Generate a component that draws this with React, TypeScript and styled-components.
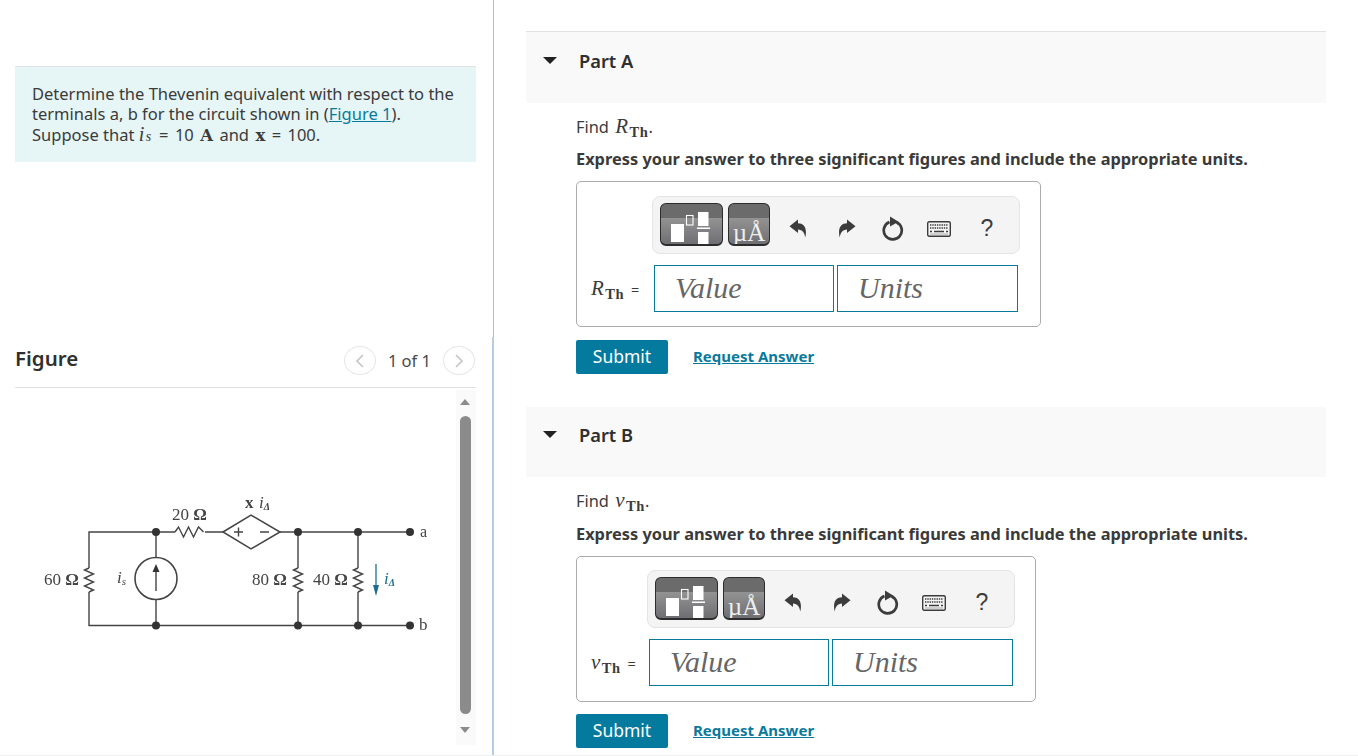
import React from "react";
import styled, { createGlobalStyle } from "styled-components";

const Global = createGlobalStyle`
  html, body { margin: 0; padding: 0; background: #fff; }
  body { width: 1358px; height: 756px; overflow: hidden; font-family: "Noto Sans", "Open Sans", sans-serif; color: #3b3b3b; }
  #root { width: 1358px; height: 756px; }
`;

const Page = styled.div`
  display: flex;
  width: 1358px;
  height: 756px;
  overflow: hidden;
  border-bottom: 1px solid #efefef;
  box-sizing: border-box;
`;
const LeftColumn = styled.section`
  width: 492px;
  flex: none;
  box-sizing: border-box;
  padding: 66px 16px 0 15px;
  display: flex;
  flex-direction: column;
`;
const Divider = styled.div`
  width: 2px;
  flex: none;
  display: flex;
  flex-direction: column;
`;
const DividerTop = styled.div`
  height: 337px;
  width: 1px;
  margin-left: 1px;
  background: #bcbcbc;
`;
const DividerBottom = styled.div`
  flex: 1;
  background: #b7cde1;
`;
const Intro = styled.div`
  background: #e6f5f6;
  border-top: 1px solid #dfe3e6;
  padding: 16.6px 17px 0;
  height: 96px;
  box-sizing: border-box;
  font-size: 16.5px;
  line-height: 20.4px;
`;
const Link = styled.a`
  color: #0a7a9c;
  text-decoration: underline;
`;
const Formula = styled.span`
  word-spacing: 2.1px;
`;
const Var = styled.span<{ $size?: number }>`
  font-family: "Liberation Serif", "DejaVu Serif", serif;
  font-style: italic;
  font-size: ${(p) => p.$size ?? 21}px;
  line-height: 1;
  letter-spacing: 1.5px;
`;
const Sub = styled.sub`
  font-family: "Liberation Serif", serif;
  font-style: normal;
  font-size: 14.5px;
  font-weight: 700;
  line-height: 0;
  vertical-align: -4px;
  letter-spacing: 0.6px;
`;
const Upright = styled.span`
  font-family: "DejaVu Serif", "Liberation Serif", serif;
  font-weight: 700;
  font-size: 16.5px;
  line-height: 1;
`;
const FigureHead = styled.header`
  display: flex;
  align-items: center;
  margin-top: 180px;
  height: 32px;
  padding-bottom: 13px;
  border-bottom: 1px solid #e0e0e0;
  box-sizing: content-box;
  padding-right: 1px;
`;
const FigureTitle = styled.h2`
  margin: 0 auto 0 0;
  font-size: 20.5px;
  font-weight: 600;
  color: #2f2f2f;
`;
const Pager = styled.div`
  display: flex;
  align-items: center;
  gap: 12px;
  margin-top: 5px;
  font-size: 16.5px;
  color: #4a4a4a;
`;
const RoundButton = styled.span`
  width: 32px;
  height: 29px;
  border: 1px solid #e6e6e6;
  border-radius: 50%;
  display: flex;
  align-items: center;
  justify-content: center;
  box-sizing: border-box;
`;
const FigurePane = styled.div`
  flex: 1;
  display: flex;
  min-height: 0;
  margin-top: 2px;
`;
const Schematic = styled.svg`
  flex: none;
  width: 441px;
  height: 356px;
  filter: blur(0.45px);
`;
const ScrollTrack = styled.div`
  width: 20px;
  height: 355px;
  background: #fafafa;
  display: flex;
  flex-direction: column;
  align-items: center;
  padding: 9px 2px 0 0;
  box-sizing: border-box;
  gap: 11px;
`;
const ScrollThumb = styled.div`
  width: 11px;
  height: 298px;
  border-radius: 6px;
  background: #8b8b8b;
`;
const ArrowUp = styled.div`
  width: 0;
  height: 0;
  border-left: 5.5px solid transparent;
  border-right: 5.5px solid transparent;
  border-bottom: 6px solid #8b8b8b;
`;
const ArrowDown = styled(ArrowUp)`
  border-bottom: 0;
  border-top: 6px solid #8b8b8b;
  margin-top: 2px;
`;

const RightColumn = styled.main`
  flex: 1;
  padding: 31px 32px 0 32px;
  min-width: 0;
`;
const PartHeader = styled.div<{ $h: number; $border?: boolean }>`
  height: ${(p) => p.$h}px;
  box-sizing: border-box;
  background: #f9f9f9;
  border-top: ${(p) => (p.$border ? "1px solid #e2e2e2" : "0")};
  display: flex;
  align-items: center;
  padding-left: 17px;
  padding-bottom: ${(p) => (p.$border ? 14 : 16)}px;
  gap: 22px;
  font-size: 18.3px;
  font-weight: 600;
  color: #2f2f2f;
`;
const Caret = styled.span`
  width: 0;
  height: 0;
  border-left: 7px solid transparent;
  border-right: 7px solid transparent;
  border-top: 7.5px solid #222;
`;
const PartBody = styled.div`
  padding: 0 0 0 50px;
`;
const Prompt = styled.p<{ $h: number }>`
  margin: 0;
  height: ${(p) => p.$h}px;
  padding-top: 13px;
  font-size: 16.4px;
  line-height: 22px;
  word-spacing: 2px;
`;
const Instruction = styled.p`
  margin: 0;
  height: 33px;
  font-size: 16.37px;
  font-weight: 700;
  line-height: 22px;
  color: #3a3a3a;
`;
const AnswerBox = styled.div<{ $w: number; $labelW: number; $top: number }>`
  width: ${(p) => p.$w}px;
  box-sizing: border-box;
  border: 1px solid #ababab;
  border-radius: 5px;
  padding: ${(p) => p.$top}px 22px ${(p) => 28 - p.$top}px 14px;
  display: grid;
  grid-template-columns: ${(p) => p.$labelW}px 364px;
  row-gap: 11px;
  align-items: center;
`;
const Toolbar = styled.div`
  grid-column: 2;
  height: 58px;
  margin: 0 -2px;
  box-sizing: border-box;
  background: #f4f4f4;
  border: 1px solid #e4e4e4;
  border-radius: 8px;
  display: flex;
  align-items: flex-start;
  padding: 6px 0 0 7px;
`;
const PaletteButton = styled.div<{ $w: number }>`
  position: relative;
  flex: none;
  width: ${(p) => p.$w}px;
  height: 43px;
  box-sizing: border-box;
  margin-right: 5px;
  border: 1px solid #2c2c2c;
  border-bottom-width: 2px;
  border-radius: 6px;
  background: linear-gradient(#6b6b6b 0 35%, #939393 35%, #6f6f73 100%);
  overflow: hidden;
`;
const Glyph = styled.svg`
  display: block;
  width: 100%;
  height: 100%;
`;
const MicroAngstrom = styled.span`
  position: absolute;
  left: 0;
  right: 0;
  bottom: -4px;
  text-align: center;
  font-family: "Liberation Serif", serif;
  font-size: 25px;
  line-height: 30px;
  color: #eee;
`;
const ToolIcon = styled.span<{ $w: number }>`
  width: ${(p) => p.$w}px;
  height: 43px;
  flex: none;
  display: flex;
  justify-content: center;
  align-items: center;
  padding-top: 4px;
  box-sizing: content-box;
  color: #3c3c3c;
  font-family: "Liberation Sans", sans-serif;
  font-size: 23px;
`;
const Label = styled.span`
  font-size: 14.5px;
  white-space: nowrap;
  word-spacing: 3px;
`;
const Fields = styled.div`
  display: flex;
  gap: 3px;
`;
const Field = styled.div<{ $w: number }>`
  width: ${(p) => p.$w}px;
  height: 47px;
  box-sizing: border-box;
  border: 1px solid #0a7a9c;
  padding-left: 20px;
  font-family: "Liberation Serif", serif;
  font-style: italic;
  font-size: 30px;
  line-height: 43px;
  color: #666;
`;
const Actions = styled.div<{ $top: number }>`
  display: flex;
  align-items: center;
  gap: 25px;
  margin-top: ${(p) => p.$top}px;
  margin-bottom: 33px;
`;
const Submit = styled.button`
  width: 92px;
  height: 34px;
  border: 0;
  border-radius: 2px;
  background: #037a9e;
  color: #fff;
  font-family: inherit;
  font-size: 17.5px;
  padding: 0 0 2px;
`;
const RequestLink = styled.a`
  color: #0a7a9c;
  font-size: 15px;
  font-weight: 700;
  text-decoration: underline;
  margin-bottom: 3px;
`;

const Undo = ({ flip }: { flip?: boolean }) => (
  <svg width="18" height="19" viewBox="0 0 18 19" style={flip ? { transform: "scaleX(-1)" } : undefined}>
    <path d="M0.5 7.2 L9 0.5 V4.2 C15 4.2 18.5 9 16.3 18.5 C15.3 13.5 13.5 11 9 10.6 V14 Z" fill="currentColor" />
  </svg>
);
const Reset = () => (
  <svg width="22" height="25" viewBox="0 0 22 25">
    <path d="M14.5 6.2 A9 9 0 1 1 7.5 6" fill="none" stroke="currentColor" strokeWidth="2.7" />
    <path d="M8 0.5 L16.5 5.8 L8 10.5 Z" fill="currentColor" />
  </svg>
);
const Keyboard = () => (
  <svg width="24" height="16" viewBox="0 0 24 16">
    <rect x="0.7" y="0.7" width="22.6" height="14.6" rx="1.5" fill="#f4f4f4" stroke="currentColor" strokeWidth="1.4" />
    <path d="M3 4h18M3 7h18" stroke="currentColor" strokeWidth="1.6" strokeDasharray="1.4 0.9" />
    <path d="M3 10.5h2M7 10.5h10M19 10.5h2" stroke="currentColor" strokeWidth="1.6" />
    <path d="M3 13h18" stroke="#999" strokeWidth="0.8" />
  </svg>
);
const Chevron = ({ right }: { right?: boolean }) => (
  <svg width="10" height="14" viewBox="0 0 10 14">
    <path d={right ? "M2 1 L8 7 L2 13" : "M8 1 L2 7 L8 13"} fill="none" stroke="#c4c4c4" strokeWidth="1.6" />
  </svg>
);

const wiggleV = (x: number, y: number) =>
  `M${x} ${y} l-4.5 2 l9 4 l-9 4 l9 4 l-9 4 l9 4 l-4.5 2`;

const Ohm = () => <tspan fontWeight="700">Ω</tspan>;

const Circuit = () => (
  <Schematic viewBox="15 390 441 356">
    <g fill="none" stroke="#444" strokeWidth="1.4">
      <path d="M410 532 H280 M223 532 H205 M175 532 H89 V568 M89 592 V625.5 H410" />
      <path d="M175 532 l3.5 -5 l5 10 l5 -10 l5 10 l5 -10 l5 5" />
      <path d={wiggleV(89, 568)} />
      <path d={wiggleV(298, 568)} />
      <path d={wiggleV(358, 568)} />
      <path d="M298 532 V568 M298 592 V625.5 M358 532 V568 M358 592 V625.5 M156 532 V557 M156 600 V625.5" />
      <path d="M223 532 L251 515 L280 532 L251 549 Z" strokeWidth="1.5" />
      <circle cx="156" cy="578.5" r="21" strokeWidth="1.6" />
      <path d="M156 591 V570" strokeWidth="1.4" />
      <path d="M234 532 h9 M238.5 527.5 v9 M260 532 h9" />
    </g>
    <path d="M156 564 l-3.5 8 h7 Z" fill="#333" />
    <g fill="#333">
      {[[156, 532], [298, 532], [358, 532], [410, 532], [156, 625.5], [298, 625.5], [358, 625.5], [410, 625.5]].map(([x, y]) => (
        <circle key={`${x}-${y}`} cx={x} cy={y} r="4" />
      ))}
    </g>
    <path d="M376 564 V587" stroke="#1f6d92" strokeWidth="1.3" />
    <path d="M376 596 l-3 -11 h6 Z" fill="#1f6d92" />
    <g fontFamily="Liberation Serif, serif" fontSize="17" fill="#444">
      <text x="172" y="520">20 <Ohm /></text>
      <text x="44" y="585">60 <Ohm /></text>
      <text x="252" y="585">80 <Ohm /></text>
      <text x="313" y="585">40 <Ohm /></text>
      <text x="245" y="508" fontWeight="700">x</text>
      <text x="259" y="508" fontStyle="italic">i<tspan fontSize="10" dy="2" fontWeight="700">Δ</tspan></text>
      <text x="117" y="583" fontStyle="italic">i<tspan fontSize="11" dy="2">s</tspan></text>
      <text x="420" y="537" fontSize="16">a</text>
      <text x="419" y="630" fontSize="17">b</text>
      <text x="384" y="584" fontStyle="italic" fill="#1f6d92">i<tspan fontSize="10" dy="2" fontWeight="700">Δ</tspan></text>
    </g>
  </Schematic>
);

type PartProps = {
  title: string;
  headerH: number;
  first?: boolean;
  symbol: string;
  boxW: number;
  labelW: number;
  promptH: number;
  boxTop: number;
  actionsTop: number;
};

const Part = ({ title, headerH, first, symbol, boxW, labelW, promptH, boxTop, actionsTop }: PartProps) => (
  <>
    <PartHeader $h={headerH} $border={first}>
      <Caret />
      {title}
    </PartHeader>
    <PartBody>
      <Prompt $h={promptH}>
        Find <Var>{symbol}</Var>
        <Sub>Th</Sub>.
      </Prompt>
      <Instruction>Express your answer to three significant figures and include the appropriate units.</Instruction>
      <AnswerBox $w={boxW} $labelW={labelW} $top={boxTop}>
        <Toolbar>
          <PaletteButton $w={63}>
            <Glyph viewBox="1 1 61 40">
              <rect x="11" y="21" width="13" height="18" fill="#fff" />
              <rect x="26.5" y="12.5" width="6.5" height="9.5" fill="none" stroke="#fff" strokeWidth="1.1" />
              <rect x="38" y="9" width="10.5" height="14" fill="#fff" />
              <rect x="37" y="24.5" width="13" height="1.5" fill="#fff" />
              <rect x="38" y="29" width="10.5" height="13" fill="#fff" />
            </Glyph>
          </PaletteButton>
          <PaletteButton $w={42}>
            <MicroAngstrom>µÅ</MicroAngstrom>
          </PaletteButton>
          <ToolIcon $w={46}><Undo /></ToolIcon>
          <ToolIcon $w={52}><Undo flip /></ToolIcon>
          <ToolIcon $w={40}><Reset /></ToolIcon>
          <ToolIcon $w={52}><Keyboard /></ToolIcon>
          <ToolIcon $w={44}>?</ToolIcon>
        </Toolbar>
        <Label>
          <Var>{symbol}</Var>
          <Sub>Th</Sub> =
        </Label>
        <Fields>
          <Field $w={180}>Value</Field>
          <Field $w={181}>Units</Field>
        </Fields>
      </AnswerBox>
      <Actions $top={actionsTop}>
        <Submit>Submit</Submit>
        <RequestLink>Request Answer</RequestLink>
      </Actions>
    </PartBody>
  </>
);

export default function App() {
  return (
    <Page>
      <Global />
      <LeftColumn>
        <Intro>
          Determine the Thevenin equivalent with respect to the terminals a, b for the circuit shown in (
          <Link>Figure 1</Link>). Suppose that{" "}
          <Formula>
            <Var $size={20}>i</Var>
            <Var $size={14}>s</Var> = 10 <Upright>A</Upright> and <Upright>x</Upright> = 100.
          </Formula>
        </Intro>
        <FigureHead>
          <FigureTitle>Figure</FigureTitle>
          <Pager>
            <RoundButton><Chevron /></RoundButton>
            1 of 1
            <RoundButton><Chevron right /></RoundButton>
          </Pager>
        </FigureHead>
        <FigurePane>
          <Circuit />
          <ScrollTrack>
            <ArrowUp />
            <ScrollThumb />
            <ArrowDown />
          </ScrollTrack>
        </FigurePane>
      </LeftColumn>
      <Divider>
        <DividerTop />
        <DividerBottom />
      </Divider>
      <RightColumn>
        <Part title="Part A" headerH={72} first symbol="R" boxW={465} labelW={63} promptH={32} boxTop={14} actionsTop={13} />
        <Part title="Part B" headerH={70} symbol="v" boxW={460} labelW={58} promptH={33} boxTop={13} actionsTop={12} />
      </RightColumn>
    </Page>
  );
}
